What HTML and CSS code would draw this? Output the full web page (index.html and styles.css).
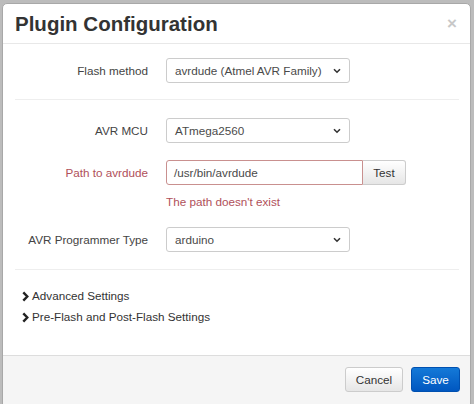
FILE: index.html
```html
<!DOCTYPE html>
<html>
<head>
<meta charset="utf-8">
<link rel="stylesheet" href="styles.css">
</head>
<body>
<div class="modal">
  <div class="modal-header">
    <h3 class="title">Plugin Configuration</h3>
    <span class="close">×</span>
  </div>
  <div class="modal-body">
    <div class="row first">
      <label class="lbl">Flash method</label>
      <div class="select"><span>avrdude (Atmel AVR Family)</span><svg class="chev" width="8" height="6" viewBox="0 0 8 6"><path d="M1 1.2 L4 4.2 L7 1.2" fill="none" stroke="#333" stroke-width="1.6"/></svg></div>
    </div>
    <div class="sep sep1"></div>
    <div class="row">
      <label class="lbl">AVR MCU</label>
      <div class="select"><span>ATmega2560</span><svg class="chev" width="8" height="6" viewBox="0 0 8 6"><path d="M1 1.2 L4 4.2 L7 1.2" fill="none" stroke="#333" stroke-width="1.6"/></svg></div>
    </div>
    <div class="row r3">
      <label class="lbl error">Path to avrdude</label>
      <div class="input-group">
        <div class="input">/usr/bin/avrdude</div>
        <div class="btn btn-add">Test</div>
      </div>
    </div>
    <div class="help">The path doesn't exist</div>
    <div class="row r4">
      <label class="lbl">AVR Programmer Type</label>
      <div class="select"><span>arduino</span><svg class="chev" width="8" height="6" viewBox="0 0 8 6"><path d="M1 1.2 L4 4.2 L7 1.2" fill="none" stroke="#333" stroke-width="1.6"/></svg></div>
    </div>
    <div class="sep sep2"></div>
    <div class="toggles">
      <div class="toggle"><svg class="tchev" width="7" height="11" viewBox="0 0 7 11"><path d="M1.3 1.3 L5.3 5.5 L1.3 9.7" fill="none" stroke="#222" stroke-width="2.4"/></svg>Advanced Settings</div>
      <div class="toggle"><svg class="tchev" width="7" height="11" viewBox="0 0 7 11"><path d="M1.3 1.3 L5.3 5.5 L1.3 9.7" fill="none" stroke="#222" stroke-width="2.4"/></svg>Pre-Flash and Post-Flash Settings</div>
    </div>
  </div>
  <div class="modal-footer">
    <div class="btn btn-default">Cancel</div>
    <div class="btn btn-primary">Save</div>
  </div>
</div>
</body>
</html>
```
FILE: styles.css
```css
html, body {
  margin: 0;
  padding: 0;
  height: 100%;
  overflow: hidden;
}
body {
  background: #bcbcbc;
  font-family: "Liberation Sans", Arial, sans-serif;
  font-size: 11.7px;
  color: #333;
  padding: 3px 2px 0 2px;
  box-sizing: border-box;
}
.modal {
  width: 469px;
  height: 420px;
  background: #fff;
  border: 1px solid #a8a8a8;
  border-radius: 5px 5px 0 0;
  box-sizing: border-box;
  display: flex;
  flex-direction: column;
}
.modal-header {
  height: 40px;
  box-sizing: border-box;
  border-bottom: 1px solid #e8e8e8;
  display: flex;
  align-items: center;
  justify-content: space-between;
  padding: 0 13px 0 12px;
}
.title {
  margin: 0;
  font-size: 20.5px;
  font-weight: bold;
  color: #333;
  line-height: 24px;
  padding-top: 1px;
}
.close {
  font-size: 17px;
  font-weight: bold;
  color: #c8c8c8;
  line-height: 20px;
}
.modal-body {
  padding: 14px 11px 0 12px;
}
.row {
  display: flex;
  align-items: center;
  height: 25px;
}
.row + .row {
  margin-top: 17px;
}
.lbl {
  width: 151px;
  text-align: right;
  padding-right: 18px;
  box-sizing: border-box;
  color: #444;
  flex: none;
}
.lbl.error, .help {
  color: #b0505a;
}
.select {
  width: 184px;
  height: 25px;
  box-sizing: border-box;
  border: 1px solid #ccc;
  border-radius: 3px;
  display: flex;
  align-items: center;
  justify-content: space-between;
  padding: 0 8px 0 8px;
  color: #4a4a4a;
  background: #fff;
}
.chev {
  display: block;
}
.sep {
  height: 1px;
  background: #eeeeee;
}
.sep1 {
  margin: 16px 0 18px;
}
.input-group {
  display: flex;
  height: 25px;
}
.input {
  width: 197px;
  box-sizing: border-box;
  border: 1px solid #c9908f;
  border-radius: 3px 0 0 3px;
  display: flex;
  align-items: center;
  padding-left: 7px;
  color: #4a4a4a;
}
.btn {
  display: flex;
  align-items: center;
  justify-content: center;
  height: 25px;
  box-sizing: border-box;
  border: 1px solid #ccc;
  border-radius: 3px;
  color: #333;
  background: linear-gradient(#ffffff, #e6e6e6);
}
.btn-add {
  width: 43px;
  border-left: none;
  border-radius: 0 3px 3px 0;
}
.help {
  margin: 9px 0 0 151px;
  line-height: 16px;
}
.row.r4 {
  margin-top: 17px;
}
.sep2 {
  margin: 17px 0 15px;
}
.toggles {
  padding-left: 7px;
}
.toggle {
  display: flex;
  align-items: center;
  line-height: 21px;
  color: #333;
}
.tchev {
  margin-right: 3px;
  margin-top: 1px;
}
.modal-footer {
  margin-top: 28px;
  flex: 1;
  background: #f5f5f5;
  border-top: 1px solid #dddddd;
  display: flex;
  justify-content: flex-end;
  align-items: flex-start;
  padding: 11px 10px 0 0;
  gap: 8px;
}
.btn-default {
  width: 58px;
}
.btn-primary {
  width: 49px;
  border-color: #0050b0;
  color: #fff;
  background: linear-gradient(#1479d8, #0057c0);
}
```
